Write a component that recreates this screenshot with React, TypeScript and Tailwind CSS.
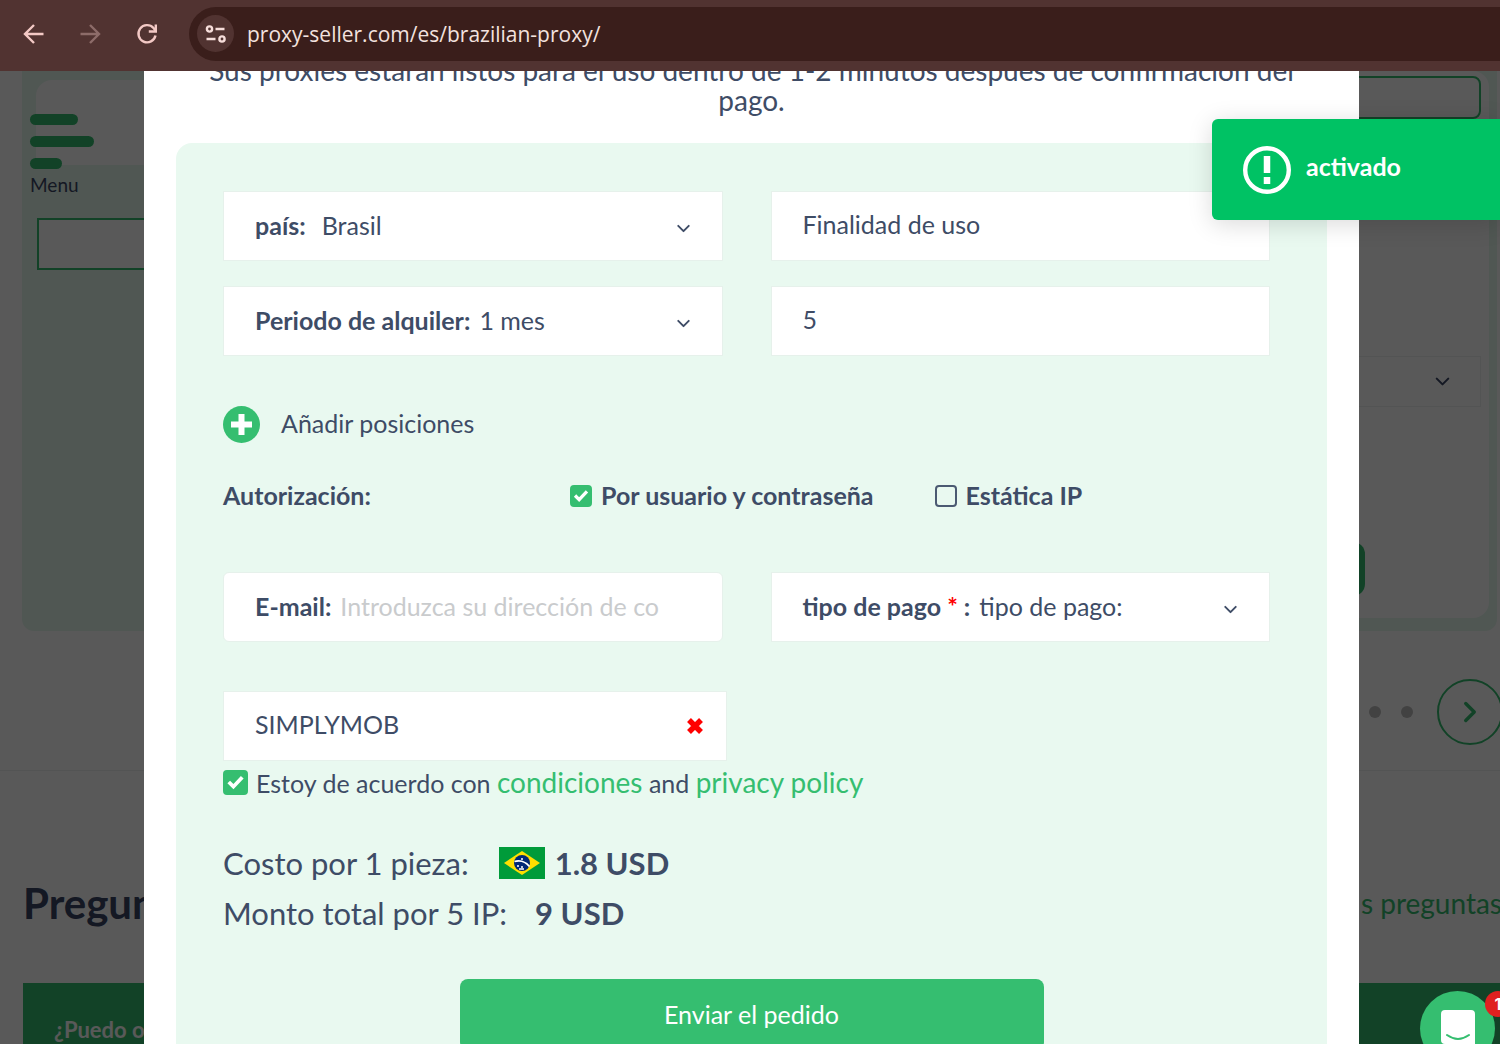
import React, { useState } from 'react';
import { ChevronDown, ChevronRight } from 'lucide-react';

interface SelectFieldProps {
  id: string;
  label: React.ReactNode;
  options: string[];
  gap?: string;
}

const FIELD = 'flex h-[70px] items-center border border-[#e6f1eb] bg-white pl-[31px] pr-7';

const SelectField: React.FC<SelectFieldProps> = ({ id, label, options, gap = 'gap-[9px]' }) => (
  <div className={`${FIELD} ${gap}`}>
    <label htmlFor={id} className="shrink-0 font-bold">
      {label}
    </label>
    <select id={id} className="h-full min-w-0 flex-1 appearance-none bg-transparent outline-none">
      {options.map((option) => (
        <option key={option}>{option}</option>
      ))}
    </select>
    <ChevronDown size={21} strokeWidth={2.2} className="pointer-events-none mt-1 shrink-0" />
  </div>
);

interface CheckboxProps {
  id: string;
  checked: boolean;
  onChange: (checked: boolean) => void;
  large?: boolean;
}

const Checkbox: React.FC<CheckboxProps> = ({ id, checked, onChange, large }) => (
  <span className={`grid shrink-0 ${large ? 'size-[25px]' : 'size-[22px]'}`}>
    <input
      id={id}
      type="checkbox"
      checked={checked}
      onChange={(e) => onChange(e.target.checked)}
      className="size-full appearance-none rounded-[4px] border-2 border-[#4b5a72] [grid-area:1/1] checked:border-[#35be70] checked:bg-[#35be70]"
    />
    {checked && (
      <svg viewBox="0 0 24 24" className="pointer-events-none size-full text-white [grid-area:1/1]">
        <path d="M5.5 11.500 10 16l8.500-9" fill="none" stroke="currentColor" strokeWidth="3.600" />
      </svg>
    )}
  </span>
);

const BrowserBar = () => (
  <header className="flex h-[71px] shrink-0 items-center bg-[#513331] pb-1 pl-[22px] text-[#f3c9c5]">
    <button aria-label="Back" className="mr-8">
      <svg width="24" height="24" viewBox="0 0 24 24" fill="none" stroke="currentColor" strokeWidth="2.400">
        <path d="M21.500 12H3.500M12 3 3 12l9 9" />
      </svg>
    </button>
    <button aria-label="Forward" className="mr-[33px] text-[#8d6c69]">
      <svg width="24" height="24" viewBox="0 0 24 24" fill="none" stroke="currentColor" strokeWidth="2.400">
        <path d="M2.500 12h18M12 3l9 9-9 9" />
      </svg>
    </button>
    <button aria-label="Reload" className="mr-[30px]">
      <svg width="24" height="24" viewBox="0 0 24 24" fill="none" stroke="currentColor" strokeWidth="2.400">
        <path d="M20.500 13.500A8.600 8.600 0 1 1 18.500 6l2 2.500" />
        <path d="M20.800 2.500v7h-7" />
      </svg>
    </button>
    <div className="flex h-[54px] flex-1 items-center gap-[13px] rounded-l-full bg-[#3a1e1b] pl-2">
      <button aria-label="Site information" className="grid size-[37px] place-items-center rounded-full bg-[#513331]">
        <svg width="22" height="22" viewBox="0 0 22 22" fill="none" stroke="#f7dedb" strokeWidth="2.400">
          <circle cx="4.500" cy="6" r="2.600" />
          <path d="M10.500 6h9M1.500 16h9" />
          <circle cx="17" cy="16" r="2.600" />
        </svg>
      </button>
      <input
        aria-label="Address"
        defaultValue="proxy-seller.com/es/brazilian-proxy/"
        className="h-full min-w-0 flex-1 bg-transparent font-['Open_Sans',sans-serif] text-[21px] text-[#f3e2df] outline-none"
      />
    </div>
  </header>
);

// The landing page that stays dimmed under the order dialog
const PageBehind = () => (
  <div className="text-[#3a4666]">
    <section className="ml-[22px] mr-[3px] flex h-[560px] justify-between overflow-hidden rounded-b-xl bg-[#e6f8ee]">
      <div className="w-1/4 pl-2 pt-[9px]">
        <div className="ml-[6px] h-[85px] rounded-tl-2xl bg-white" />
        <button className="-mt-[51px] block text-left text-[19px] leading-[22px]">
          <span className="mb-[11px] block h-[11px] w-[48px] rounded-full bg-[#35be70]" />
          <span className="mb-[11px] block h-[11px] w-[64px] rounded-full bg-[#35be70]" />
          <span className="mb-[5px] block h-[11px] w-[32px] rounded-full bg-[#35be70]" />
          Menu
        </button>
        <div className="ml-[7px] mt-[22px] h-[52px] border-2 border-[#35be70] bg-white" />
      </div>
      <div className="mb-[13px] mr-2 w-1/4 rounded-r-2xl bg-white pr-2">
        <div className="mt-[5px] h-[43px] rounded-lg border-2 border-[#35be70]" />
        <div className="mt-[237px] flex h-[51px] items-center justify-end border border-[#eef0ef] pr-[26px]">
          <ChevronDown size={23} strokeWidth={2.2} />
        </div>
        <div className="mt-[135px] h-[54px] w-[245px] rounded-xl bg-[#35be70]" />
      </div>
    </section>
    <div className="flex h-[140px] items-center justify-end gap-5 border-b border-[#eef0ef] pt-[22px]">
      <span className="size-3 rounded-full bg-[#bcbcbc]" />
      <span className="size-3 rounded-full bg-[#bcbcbc]" />
      <button
        aria-label="Siguiente"
        className="-mr-[3px] ml-1 grid size-[66px] place-items-center rounded-full border-2 border-[#35be70] text-[#35be70]"
      >
        <ChevronRight size={34} strokeWidth={2.4} />
      </button>
    </div>
    <div className="flex h-[212px] items-center justify-between pl-[23px] pt-[52px]">
      <h2 className="text-[42px] font-bold">Pregun</h2>
      <a href="#preguntas" className="-mr-[2px] text-[28px] text-[#35be70]">
        s preguntas
      </a>
    </div>
    <div className="ml-[23px] h-40 bg-[#35be70] pl-[31px] pt-[30px] text-[22px] font-bold text-white">¿Puedo o</div>
  </div>
);

const BrazilFlag = () => (
  <svg width="46" height="32" viewBox="0 0 46 32" aria-label="Brasil">
    <path fill="#009b3a" d="M0 0h46v32H0z" />
    <path fill="#fedf00" d="M5 16 23 4l18 12-18 12z" />
    <circle cx="23" cy="16" r="8" fill="#002776" />
    <path d="M15.500 14.500c5-1.500 11 0 15 5" fill="none" stroke="#fff" strokeWidth="1.800" />
    <path d="M18 19h2m2 1h2m-4 2h5m-3-10h2" stroke="#fff" strokeWidth="1.500" />
  </svg>
);

const OrderForm = () => {
  const [byUser, setByUser] = useState(true);
  const [byIp, setByIp] = useState(false);
  const [agree, setAgree] = useState(true);
  const [coupon, setCoupon] = useState('SIMPLYMOB');

  return (
    <form
      onSubmit={(e) => e.preventDefault()}
      className="mx-8 rounded-t-2xl bg-[#e9f9f0] pb-12 pl-[47px] pr-[57px] pt-12"
    >
      <div className="grid grid-cols-2 gap-x-12 gap-y-[25px]">
        <SelectField id="country" label="país:" options={['Brasil']} gap="gap-4" />
        <div className={FIELD}>
          <input
            aria-label="Finalidad de uso"
            placeholder="Finalidad de uso"
            className="h-full w-full bg-transparent pb-1 outline-none placeholder:text-[#3e4c66]"
          />
        </div>
        <SelectField id="period" label="Periodo de alquiler:" options={['1 mes']} />
        <div className={FIELD}>
          <input aria-label="Cantidad" defaultValue="5" className="h-full w-full bg-transparent pb-1 outline-none" />
        </div>
      </div>

      <button type="button" className="mt-12 flex h-10 items-center gap-[21px]">
        <svg width="37" height="37" viewBox="0 0 37 37">
          <circle cx="18.500" cy="18.500" r="18.500" fill="#35be70" />
          <path d="M18.500 8v21M8 18.500h21" stroke="#fff" strokeWidth="6" />
        </svg>
        Añadir posiciones
      </button>

      <div role="group" aria-labelledby="auth-label" className="mt-8 flex h-10 items-center font-bold">
        <span id="auth-label" className="w-[347px]">
          Autorización:
        </span>
        <span className="mr-[61px] flex items-center gap-[9px]">
          <Checkbox id="by-user" checked={byUser} onChange={setByUser} />
          <label htmlFor="by-user">Por usuario y contraseña</label>
        </span>
        <span className="flex items-center gap-[9px]">
          <Checkbox id="by-ip" checked={byIp} onChange={setByIp} />
          <label htmlFor="by-ip">Estática IP</label>
        </span>
      </div>

      <div className="mt-14 grid grid-cols-2 gap-x-12">
        <div className={`${FIELD} gap-[9px] rounded-md`}>
          <label htmlFor="email" className="font-bold">
            E-mail:
          </label>
          <input
            id="email"
            type="email"
            placeholder="Introduzca su dirección de co"
            className="h-full min-w-0 flex-1 bg-transparent pb-[2px] outline-none placeholder:text-[#c9cbcd]"
          />
        </div>
        <SelectField
          id="payment"
          label={
            <>
              tipo de pago <span className="text-[#ff0000]">*</span> :
            </>
          }
          options={['tipo de pago:']}
        />
      </div>

      <div className={`${FIELD} mt-[49px] w-[504px]`}>
        <input
          aria-label="Cupón"
          value={coupon}
          onChange={(e) => setCoupon(e.target.value)}
          className="h-full min-w-0 flex-1 bg-transparent pb-1 outline-none"
        />
        <button type="button" aria-label="Quitar cupón" onClick={() => setCoupon('')} className="-mr-[6px]">
          <svg width="18" height="18" viewBox="0 0 18 18">
            <path d="m3 3 12 12M15 3 3 15" stroke="#f00" strokeWidth="5.500" />
          </svg>
        </button>
      </div>

      <div className="flex h-[42px] items-center gap-2">
        <Checkbox id="agree" checked={agree} onChange={setAgree} large />
        <p>
          <label htmlFor="agree">Estoy de acuerdo con</label>{' '}
          <a href="#condiciones" className="text-[28px] text-[#35be70]">
            condiciones
          </a>{' '}
          and{' '}
          <a href="#privacy" className="text-[28px] text-[#35be70]">
            privacy policy
          </a>
        </p>
      </div>

      <div className="mt-[35px] text-[31px] leading-[50px]">
        <p className="flex items-center">
          Costo por 1 pieza:
          <span className="ml-[30px] mr-[10px]">
            <BrazilFlag />
          </span>
          <strong>1.8 USD</strong>
        </p>
        <p className="flex items-center gap-7">
          Monto total por 5 IP: <strong>9 USD</strong>
        </p>
      </div>

      <div className="-mr-[10px] mt-[41px] flex justify-center">
        <button className="h-[71px] w-[584px] rounded-lg bg-[#35be70] text-white">Enviar el pedido</button>
      </div>
    </form>
  );
};

const Toast = () => (
  <div
    role="status"
    className="absolute right-0 top-12 flex h-[101px] w-72 items-center gap-[15px] rounded-l-md bg-[#00c264] pl-[31px] text-white shadow-[0_4px_24px_rgba(0,0,0,0.15)]"
  >
    <svg width="48" height="48" viewBox="0 0 48 48" fill="none" stroke="currentColor">
      <circle cx="24" cy="24" r="21.800" strokeWidth="4.400" />
      <path d="M24 10v17M24 31v7" strokeWidth="6.500" />
    </svg>
    <span className="pb-[6px] font-bold">activado</span>
  </div>
);

const ChatLauncher = () => (
  <button aria-label="Chat" className="absolute right-[5px] top-[920px] size-[75px] rounded-full bg-[#35be70]">
    <svg width="34" height="38" viewBox="0 0 34 38" className="mx-auto">
      <path fill="#fff" d="M4 0h26a4 4 0 0 1 4 4v34l-7-4H4a4 4 0 0 1-4-4V4a4 4 0 0 1 4-4z" />
      <path d="M6 25c7 5 15 5 22 0" fill="none" stroke="#35be70" strokeWidth="2" strokeLinecap="round" />
    </svg>
    <span className="absolute -right-4 top-0 grid size-[26px] place-items-center rounded-full bg-[#e02020] font-['Inter',sans-serif] text-base font-bold text-white">
      1
    </span>
  </button>
);

export default function App() {
  return (
    <div className="flex h-screen flex-col overflow-hidden bg-white font-['Lato',sans-serif] text-[25px] text-[#3e4c66]">
      <BrowserBar />
      <main className="relative min-h-0 flex-1 overflow-hidden">
        <PageBehind />
        <div className="absolute inset-0 overflow-hidden bg-black/65 pl-36 pr-[141px]">
          {/* scrolled a little, so the first line is half under the bar */}
          <div role="dialog" aria-label="Pedido" className="-mt-4 bg-white">
            <p className="mb-7 px-12 text-center text-[28px] leading-[30px]">
              Sus proxies estarán listos para el uso dentro de 1-2 minutos después de confirmación del pago.
            </p>
            <OrderForm />
          </div>
        </div>
        <ChatLauncher />
        <Toast />
      </main>
    </div>
  );
}
